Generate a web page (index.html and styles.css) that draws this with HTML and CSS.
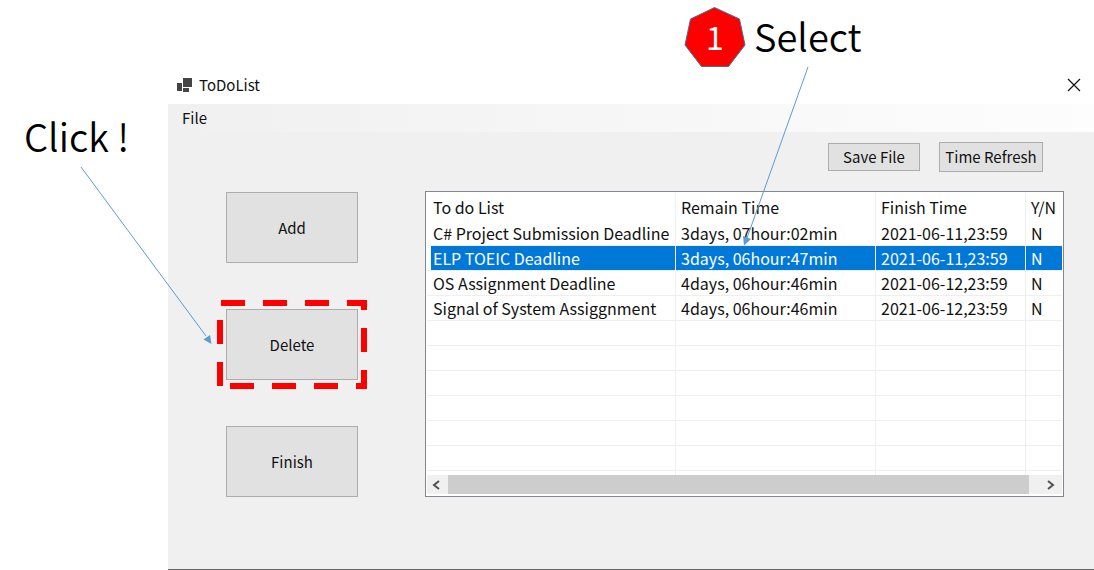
FILE: index.html
```html
<!DOCTYPE html>
<html lang="en">

<head>
    <meta charset="UTF-8">
    <meta name="viewport" content="width=device-width, initial-scale=1.0">
    <title>ToDoList</title>
    <link rel="stylesheet" href="styles.css">
</head>

<body>

    <div class="guide">
        <!-- Step label -->
        <div class="step">
            <div class="step-badge">
                <svg width="62" height="62" viewBox="0 0 62 62">
                    <path d="M30.500 1.500L55.500 13L61 39L44.500 60.500H17.500L1 39L6.500 13Z" fill="#ff0000" stroke="#41719c" />
                </svg>
                <span>1</span>
            </div>
            <span class="step-text">Select</span>
        </div>

        <div class="click-text">Click !</div>

        <!-- ToDoList window -->
        <div class="window">
            <div class="title-bar">
                <svg class="app-icon" width="17" height="16" viewBox="0 0 17 16">
                    <path d="M7 1h9v9H7zM1 6h5v8H1zM7 11h6v4H7z" fill="#444444" />
                </svg>
                <span class="title">ToDoList</span>
                <button class="close-btn" aria-label="Close">
                    <svg width="14" height="14" viewBox="0 0 14 14">
                        <path d="M1 1L13 13M13 1L1 13" stroke="#111111" stroke-width="1.200" />
                    </svg>
                </button>
            </div>

            <div class="menu-bar">
                <button class="menu-item">File</button>
            </div>

            <div class="content">
                <div class="toolbar">
                    <button class="btn save-btn">Save File</button>
                    <button class="btn refresh-btn">Time Refresh</button>
                </div>

                <div class="main">
                    <div class="actions">
                        <button class="btn">Add</button>
                        <div class="marked">
                            <button class="btn">Delete</button>
                            <svg class="dashes" width="152" height="90" viewBox="0 0 152 90">
                                <path d="M5 4H148V87H4" />
                                <path d="M4 87V18" />
                            </svg>
                        </div>
                        <button class="btn">Finish</button>
                    </div>

                    <div class="list-view">
                        <div class="list-body">
                            <table>
                                <colgroup>
                                    <col class="col-name">
                                    <col class="col-remain">
                                    <col class="col-finish">
                                    <col>
                                </colgroup>
                                <thead>
                                    <tr><th>To do List</th><th>Remain Time</th><th>Finish Time</th><th>Y/N</th></tr>
                                </thead>
                                <tbody>
                                    <tr><td>C# Project Submission Deadline</td><td>3days, 07hour:02min</td><td>2021-06-11,23:59</td><td>N</td></tr>
                                    <tr class="selected"><td>ELP TOEIC Deadline</td><td>3days, 06hour:47min</td><td>2021-06-11,23:59</td><td>N</td></tr>
                                    <tr><td>OS Assignment Deadline</td><td>4days, 06hour:46min</td><td>2021-06-12,23:59</td><td>N</td></tr>
                                    <tr><td>Signal of System Assiggnment</td><td>4days, 06hour:46min</td><td>2021-06-12,23:59</td><td>N</td></tr>
                                    <tr><td></td><td></td><td></td><td></td></tr>
                                    <tr><td></td><td></td><td></td><td></td></tr>
                                    <tr><td></td><td></td><td></td><td></td></tr>
                                    <tr><td></td><td></td><td></td><td></td></tr>
                                    <tr><td></td><td></td><td></td><td></td></tr>
                                    <tr><td></td><td></td><td></td><td></td></tr>
                                    <tr><td></td><td></td><td></td><td></td></tr>
                                </tbody>
                            </table>
                        </div>
                        <div class="scroll-bar">
                            <button class="scroll-left" aria-label="Scroll left">
                                <svg width="8" height="10" viewBox="0 0 8 10"><path d="M7 1L2 5L7 9" /></svg>
                            </button>
                            <div class="thumb"></div>
                            <button class="scroll-right" aria-label="Scroll right">
                                <svg width="8" height="10" viewBox="0 0 8 10"><path d="M1 1L6 5L1 9" /></svg>
                            </button>
                        </div>
                    </div>
                </div>
            </div>
        </div>

        <!-- Arrows over the window -->
        <svg class="arrows" width="820" height="350" viewBox="0 0 820 350">
            <path class="line" d="M81 167L206 336M808 67L747 238" />
            <path class="head" d="M211.500 344L203.500 339.500L210 335ZM744 245.500L743 236L751 239Z" />
        </svg>
    </div>

</body>

</html>
```

FILE: styles.css
```css
* {
    box-sizing: border-box;
}

body {
    margin: 0;
    background-color: #fff;
    color: #111;
    font-family: "Noto Sans CJK KR", "Noto Sans", sans-serif;
    font-size: 15px;
    line-height: 20px;
}

button {
    padding: 0;
    border: none;
    background: none;
    color: inherit;
    font: inherit;
}

svg {
    display: block;
}

.guide {
    position: relative;
    display: grid;
    grid-template-columns: 168px 1fr;
    grid-template-rows: 69px auto;
    min-height: 100vh;
}

.step {
    grid-column: 1 / 3;
    display: flex;
    align-items: flex-start;
    gap: 8px;
    padding: 6px 0 0 684px;
}

.step-badge {
    display: grid;
    justify-items: center;
    color: #fff;
    font-size: 32px;
    line-height: 60px;
}

    .step-badge > * {
        grid-area: 1 / 1;
    }

.step-text,
.click-text {
    color: #000;
    font-size: 38px;
    font-weight: 350;
    line-height: 60px;
}

.click-text {
    padding: 37px 0 0 24px;
    white-space: pre;
}

/* Window */
.window {
    display: flex;
    flex-direction: column;
    border-bottom: 1px solid #666;
}

.title-bar {
    display: flex;
    align-items: center;
    height: 35px;
    padding: 0 13px 3px 8px;
}

.title {
    flex: 1;
    padding-left: 6px;
}

.menu-bar {
    display: flex;
    height: 28px;
    padding: 0 14px;
    background: linear-gradient(to right, #f0f0f0, #fdfdfd);
}

.content {
    flex: 1;
    padding: 10px 30px 72px 58px;
    background-color: #f0f0f0;
}

.btn {
    border: 1px solid #adadad;
    background-color: #e1e1e1;
}

/* Save and refresh buttons */
.toolbar {
    display: flex;
    justify-content: flex-end;
    align-items: center;
    gap: 19px;
    padding-right: 21px;
}

.save-btn {
    width: 92px;
    height: 28px;
}

.refresh-btn {
    width: 104px;
    height: 30px;
}

.main {
    display: flex;
    gap: 67px;
    padding-top: 19px;
}

.actions {
    display: flex;
    flex-direction: column;
    justify-content: space-between;
    width: 132px;
    padding-top: 1px;
}

    .actions .btn {
        display: block;
        width: 100%;
        height: 71px;
    }

.marked {
    position: relative;
}

.dashes {
    position: absolute;
    top: -10px;
    left: -10px;
    fill: none;
    stroke: #ff0000;
    stroke-width: 6;
    stroke-dasharray: 24 18;
    pointer-events: none;
}

/* List */
.list-view {
    flex: 1;
    display: flex;
    flex-direction: column;
    height: 306px;
    padding: 0 1px 2px;
    border: 1px solid #828790;
    background-color: #fff;
    font-size: 16px;
}

.list-body {
    flex: 1;
    overflow: hidden;
}

table {
    width: 100%;
    table-layout: fixed;
    border-collapse: separate;
    border-spacing: 0;
}

.col-name {
    width: 249px;
}

.col-remain {
    width: 200px;
}

.col-finish {
    width: 150px;
}

th,
td {
    height: 25px;
    padding: 0 0 0 5px;
    border-right: 1px solid #efefef;
    border-bottom: 1px solid #efefef;
    font-weight: 400;
    text-align: left;
    white-space: nowrap;
}

th {
    height: 29px;
    border-bottom: none;
}

    th:first-child,
    td:first-child {
        padding-left: 6px;
    }

    th:last-child,
    td:last-child {
        border-right: none;
    }

.selected td {
    background-color: #0078d7;
    color: #fff;
}

    .selected td:first-child {
        background: linear-gradient(to right, #fff 4px, #0078d7 4px);
    }

.scroll-bar {
    display: flex;
    height: 19px;
    background-color: #f0f0f0;
}

    .scroll-bar button {
        display: flex;
        align-items: center;
    }

    .scroll-bar .scroll-left {
        width: 21px;
        padding-left: 5px;
    }

    .scroll-bar .scroll-right {
        justify-content: flex-end;
        width: 33px;
        padding-right: 7px;
    }

    .scroll-bar path {
        fill: none;
        stroke: #505050;
        stroke-width: 2;
    }

.thumb {
    flex: 1;
    background-color: #cdcdcd;
}

/* Arrows */
.arrows {
    position: absolute;
    top: 0;
    left: 0;
    pointer-events: none;
}

    .arrows .line {
        fill: none;
        stroke: #5b9bd5;
    }

    .arrows .head {
        fill: #5b9bd5;
    }
```
